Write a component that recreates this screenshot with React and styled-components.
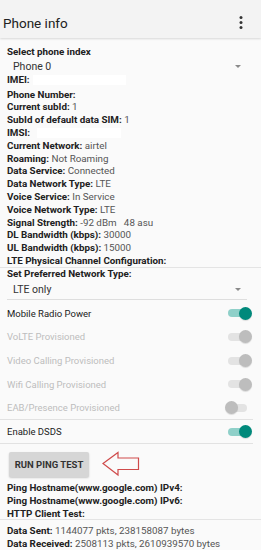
import React from "react";
import styled, { createGlobalStyle } from "styled-components";

const GlobalStyle = createGlobalStyle`
  * { box-sizing: border-box; }
  body {
    margin: 0;
    background: #fafafa;
    font-family: Roboto, "Noto Sans", sans-serif;
  }
`;

const Screen = styled.div`
  width: 261px;
  height: 550px;
  overflow: hidden;
  background: #fafafa;
`;

const Toolbar = styled.header`
  height: 38px;
  display: flex;
  align-items: center;
  justify-content: space-between;
  padding: 7px 18px 0 3px;
  background: #f3f3f3;
  box-shadow: 0 1px 2px rgba(0, 0, 0, 0.14);
  position: relative;
  z-index: 1;
`;

const Title = styled.h1`
  margin: 0;
  font-size: 13.5px;
  font-weight: 400;
  color: #212121;
`;

const Body = styled.main`
  padding-top: 7.6px;
`;

const Block = styled.div`
  padding-left: 7px;
`;

const Line = styled.div`
  font-size: 9.8px;
  line-height: 12.8px;
  height: 12.8px;
  color: #555;
  white-space: nowrap;
  margin-bottom: ${p => p.$gap || 0}px;
`;

const Label = styled.b`
  font-weight: 700;
  color: #212121;
`;

const Redacted = styled.span`
  display: inline-block;
  width: ${p => p.$w}px;
  height: 10px;
  background: #fff;
  vertical-align: -2px;
  margin-left: ${p => p.$ml || 3}px;
`;

const Spinner = styled.div`
  width: 240px;
  height: ${p => p.$h}px;
  display: flex;
  align-items: center;
  justify-content: space-between;
  padding: 0 6px;
  font-size: 10.5px;
  color: #333;
  border-bottom: ${p => (p.$line ? "1px solid #dedede" : "none")};
`;

const Caret = styled.span`
  width: 0;
  height: 0;
  border-left: 3px solid transparent;
  border-right: 3px solid transparent;
  border-top: 3px solid #8a8a8a;
`;

const Divider = styled.div`
  height: 1px;
  background: #e4e4e4;
  margin: ${p => p.$m || "0"};
`;

const ToggleList = styled.div`
  padding-top: 1.6px;
`;

const ToggleRow = styled.div`
  width: 253px;
  height: 23.8px;
  display: flex;
  align-items: center;
  justify-content: space-between;
  padding: 0 6px 0 7px;
  font-size: 9.5px;
  color: ${p => (p.$disabled ? "#bdbdbd" : "#212121")};
  border-bottom: ${p => (p.$line ? "1px solid #e2e2e2" : "none")};
`;

const Track = styled.span`
  position: relative;
  width: 19px;
  height: 8px;
  border-radius: 4px;
  background: ${p => (p.$disabled ? "#e3e3e3" : "#8fd0c9")};
`;

const Thumb = styled.span`
  position: absolute;
  top: -2.5px;
  width: 13px;
  height: 13px;
  border-radius: 50%;
  background: ${p => (p.$disabled ? "#bdbdbd" : "#00897b")};
  ${p => (p.$on ? "right: -4.5px;" : "left: -3px;")}
  box-shadow: 0 1px 1px rgba(0, 0, 0, 0.12);
`;

const ActionRow = styled.div`
  display: flex;
  align-items: center;
  gap: 13px;
  padding: 7.5px 0 0 9px;
`;

const PingButton = styled.button`
  width: 80px;
  height: 25.3px;
  border: none;
  border-radius: 2px;
  background: #d6d6d6;
  box-shadow: 0 1px 2px rgba(0, 0, 0, 0.2);
  font-family: Roboto, sans-serif;
  font-size: 9.5px;
  font-weight: 700;
  color: #333;
  padding: 0;
`;

const Results = styled.div`
  padding: 5px 0 0 7px;
`;

const Switch = ({ on, disabled }) => (
  <Track $disabled={disabled}>
    <Thumb $on={on} $disabled={disabled} />
  </Track>
);

const toggles = [
  { label: "Mobile Radio Power", on: true },
  { label: "VoLTE Provisioned", on: true, disabled: true },
  { label: "Video Calling Provisioned", on: true, disabled: true },
  { label: "Wifi Calling Provisioned", on: true, disabled: true },
  { label: "EAB/Presence Provisioned", on: false, disabled: true, line: true },
  { label: "Enable DSDS", on: true, line: true }
];

const info = [
  ["Phone Number:", ""],
  ["Current subId:", " 1"],
  ["SubId of default data SIM:", " 1"],
  ["IMSI:", null],
  ["Current Network:", " airtel"],
  ["Roaming:", " Not Roaming"],
  ["Data Service:", " Connected"],
  ["Data Network Type:", " LTE"],
  ["Voice Service:", " In Service"],
  ["Voice Network Type:", " LTE"],
  ["Signal Strength:", " -92 dBm   48 asu"],
  ["DL Bandwidth (kbps):", " 30000"],
  ["UL Bandwidth (kbps):", " 15000"],
  ["LTE Physical Channel Configuration:", ""]
];

export default function App() {
  return (
    <Screen>
      <GlobalStyle />
      <Toolbar>
        <Title>Phone info</Title>
        <svg width="4" height="13" viewBox="0 0 4 13">
          <circle cx="2" cy="1.6" r="1.5" fill="#333" />
          <circle cx="2" cy="6.5" r="1.5" fill="#333" />
          <circle cx="2" cy="11.4" r="1.5" fill="#333" />
        </svg>
      </Toolbar>
      <Body>
        <Block>
          <Line><Label>Select phone index</Label></Line>
          <Spinner $h={15.4}>
            <span>Phone 0</span>
            <Caret />
          </Spinner>
          <Line $gap={2}>
            <Label>IMEI:</Label>
            <Redacted $w={93} />
          </Line>
          {info.map(([label, value]) => (
            <Line key={label}>
              <Label>{label}</Label>
              {value === null ? <Redacted $w={84} $ml={7} /> : <span style={{ whiteSpace: "pre" }}>{value}</span>}
            </Line>
          ))}
        </Block>
        <Divider $m="-1px 0 0" />
        <Block>
          <Line><Label>Set Preferred Network Type:</Label></Line>
          <Spinner $h={19} $line>
            <span>LTE only</span>
            <Caret />
          </Spinner>
        </Block>
        <ToggleList>
          {toggles.map(t => (
            <ToggleRow key={t.label} $disabled={t.disabled} $line={t.line}>
              <span>{t.label}</span>
              <Switch on={t.on} disabled={t.disabled} />
            </ToggleRow>
          ))}
        </ToggleList>
        <ActionRow>
          <PingButton>RUN PING TEST</PingButton>
          <svg width="38" height="26" viewBox="0 0 38 26">
            <path
              d="M1 12.5 L16 1.5 L16 7 L36.5 7 L36.5 18.5 L16 18.5 L16 24 Z"
              fill="none"
              stroke="#cf4a4a"
              strokeWidth="1.2"
              strokeLinejoin="miter"
            />
          </svg>
        </ActionRow>
        <Results>
          <Line><Label>Ping Hostname(www.google.com) IPv4:</Label></Line>
          <Line><Label>Ping Hostname(www.google.com) IPv6:</Label></Line>
          <Line><Label>HTTP Client Test:</Label></Line>
        </Results>
        <Divider $m="-2px 0 0" />
        <Results>
          <Line><Label>Data Sent:</Label> 1144077 pkts, 238158087 bytes</Line>
          <Line><Label>Data Received:</Label> 2508113 pkts, 2610939570 bytes</Line>
        </Results>
      </Body>
    </Screen>
  );
}
